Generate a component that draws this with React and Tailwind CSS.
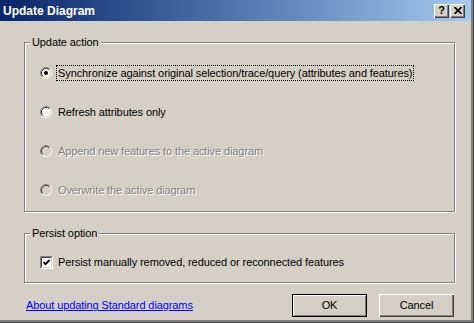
import { useState } from 'react'

const FONT = "font-['Liberation_Sans',Arial,sans-serif]"

function Radio({ checked, disabled }) {
  return (
    <svg width="12" height="12" viewBox="0 0 12 12" className="shrink-0">
      <circle cx="6" cy="6" r="4.2" fill={disabled ? '#d4d0c8' : '#fff'} />
      <path d="M2.11 9.89 A5.5 5.5 0 0 1 9.89 2.11" fill="none" stroke="#808080" strokeWidth="1" />
      <path d="M9.89 2.11 A5.5 5.5 0 0 1 2.11 9.89" fill="none" stroke="#fff" strokeWidth="1" />
      <path d="M2.82 9.18 A4.5 4.5 0 0 1 9.18 2.82" fill="none" stroke="#404040" strokeWidth="1" />
      <path d="M9.18 2.82 A4.5 4.5 0 0 1 2.82 9.18" fill="none" stroke="#d4d0c8" strokeWidth="1" />
      {checked && <circle cx="6" cy="6" r="2" fill="#000" />}
    </svg>
  )
}

function Checkbox({ checked }) {
  return (
    <svg width="13" height="13" viewBox="0 0 13 13" className="shrink-0">
      <rect x="0" y="0" width="13" height="13" fill="#fff" />
      <path d="M0.5 12.5 V0.5 H12.5" fill="none" stroke="#808080" />
      <path d="M1.5 11.5 V1.5 H11.5" fill="none" stroke="#404040" />
      <path d="M11.5 1.5 V11.5 H1.5" fill="none" stroke="#d4d0c8" />
      {checked && <path d="M3.5 6 L5.5 8.2 L9.6 4" fill="none" stroke="#000" strokeWidth="1.8" />}
    </svg>
  )
}

function Group({ label, className = '', children }) {
  return (
    <div className={`relative ml-[24px] w-[431px] border border-[#808080] shadow-[inset_1px_1px_0_#fff,1px_1px_0_#fff] ${className}`}>
      <span className="absolute -top-[8px] left-[5px] bg-[#d4d0c8] px-[2px] leading-[14px]">{label}</span>
      {children}
    </div>
  )
}

function Option({ label, checked, disabled, focused, onClick }) {
  return (
    <div className="h-[20px] flex items-center pl-[15px] gap-[4px]" onClick={disabled ? undefined : onClick}>
      <Radio checked={checked} disabled={disabled} />
      <span
        className={`leading-[14px] px-[1px] border ${focused ? 'border-dotted border-black' : 'border-transparent'} ${
          disabled ? 'text-[#808080] [text-shadow:1px_1px_0_#fff]' : 'text-black'
        }`}
      >
        {label}
      </span>
    </div>
  )
}

const OPTIONS = [
  'Synchronize against original selection/trace/query (attributes and features)',
  'Refresh attributes only',
  'Append new features to the active diagram',
  'Overwrite the active diagram',
]

export default function App() {
  const [choice, setChoice] = useState(0)
  const [persist, setPersist] = useState(true)

  return (
    <div className={`w-[474px] h-[323px] overflow-hidden bg-[#d4d0c8] text-[11px] tracking-[-0.1px] text-black ${FONT} border-r border-b border-[#404040]`}>
      <div className="h-full border-r-2 border-b-2 border-[#808080]">
        {/* title bar */}
        <div className="h-[21px] flex items-center justify-between pl-[3px] pr-[6px] bg-linear-to-r from-[#0a246a] to-[#a6caf0]">
          <span className="text-white font-bold text-[12px] tracking-normal">Update Diagram</span>
          <div className="flex gap-[1px]">
            <div className="w-[15px] h-[14px] flex items-center justify-center bg-[#d4d0c8] shadow-[inset_1px_1px_0_#fff,inset_-1px_-1px_0_#404040,inset_-2px_-2px_0_#808080] text-[11px] font-bold leading-none">?</div>
            <div className="w-[15px] h-[14px] flex items-center justify-center bg-[#d4d0c8] shadow-[inset_1px_1px_0_#fff,inset_-1px_-1px_0_#404040,inset_-2px_-2px_0_#808080]">
              <svg width="8" height="7" viewBox="0 0 8 7">
                <path d="M0.5 0 L7.5 7 M7.5 0 L0.5 7" stroke="#000" strokeWidth="1.6" />
              </svg>
            </div>
          </div>
        </div>

        <Group label="Update action" className="mt-[21px] h-[170px] pt-[20px]">
          <div className="flex flex-col gap-[19px]">
            {OPTIONS.map((o, i) => (
              <Option
                key={o}
                label={o}
                checked={choice === i}
                disabled={i >= 2}
                focused={i === 0}
                onClick={() => setChoice(i)}
              />
            ))}
          </div>
        </Group>

        <Group label="Persist option" className="mt-[21px] h-[50px] pt-[18px]">
          <div className="h-[20px] flex items-center pl-[15px] gap-[5px]" onClick={() => setPersist(p => !p)}>
            <Checkbox checked={persist} />
            <span>Persist manually removed, reduced or reconnected features</span>
          </div>
        </Group>

        <div className="mt-[11px] flex items-center pl-[26px] pr-[17px]">
          <a href="#" className="text-[#0000ff] underline flex-1">About updating Standard diagrams</a>
          <button className="w-[75px] h-[23px] border border-black bg-[#d4d0c8] shadow-[inset_1px_1px_0_#fff,inset_-1px_-1px_0_#808080]">OK</button>
          <button className="ml-[12px] w-[75px] h-[23px] bg-[#d4d0c8] shadow-[inset_1px_1px_0_#fff,inset_-1px_-1px_0_#404040,inset_-2px_-2px_0_#808080]">Cancel</button>
        </div>
      </div>
    </div>
  )
}
